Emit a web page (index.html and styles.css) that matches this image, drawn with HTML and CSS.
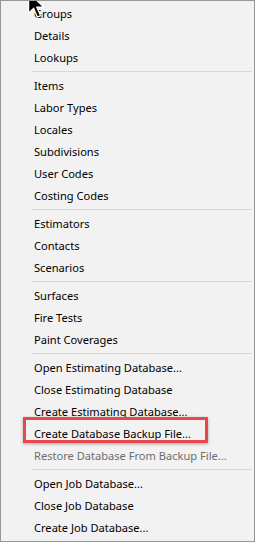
FILE: index.html
```html
<!DOCTYPE html>
<html>
<head>
<meta charset="utf-8">
<link rel="stylesheet" href="styles.css">
</head>
<body>
<div class="menu">
  <div class="item">Groups</div>
  <div class="item">Details</div>
  <div class="item">Lookups</div>
  <div class="sep"></div>
  <div class="item">Items</div>
  <div class="item">Labor Types</div>
  <div class="item">Locales</div>
  <div class="item">Subdivisions</div>
  <div class="item">User Codes</div>
  <div class="item">Costing Codes</div>
  <div class="sep"></div>
  <div class="item">Estimators</div>
  <div class="item">Contacts</div>
  <div class="item">Scenarios</div>
  <div class="sep"></div>
  <div class="item">Surfaces</div>
  <div class="item">Fire Tests</div>
  <div class="item">Paint Coverages</div>
  <div class="sep"></div>
  <div class="item">Open Estimating Database...</div>
  <div class="item">Close Estimating Database</div>
  <div class="item">Create Estimating Database...</div>
  <div class="item">Create Database Backup File...</div>
  <div class="item disabled">Restore Database From Backup File...</div>
  <div class="sep"></div>
  <div class="item">Open Job Database...</div>
  <div class="item">Close Job Database</div>
  <div class="item">Create Job Database...</div>
  <div class="highlight"></div>
  <svg class="cursor" width="20" height="30" viewBox="0 0 16 24">
    <polygon points="0.5,0.5 0.5,17 4.5,13 7.5,20 10,19 7,12 12.5,12" fill="#000" stroke="#fff" stroke-width="1"/>
  </svg>
</div>
</body>
</html>
```
FILE: styles.css
```css
html, body {
  margin: 0;
  padding: 0;
  background: #f0f0f0;
}
.menu {
  position: relative;
  box-sizing: border-box;
  width: 255px;
  height: 542px;
  border: 1px solid #979797;
  background: #f2f2f2;
  padding: 2px 0 2px 0;
  font-family: "Noto Sans", "Open Sans", sans-serif;
  font-size: 11.1px;
  color: #000;
  overflow: hidden;
}
.item {
  height: 22px;
  line-height: 22px;
  padding-left: 33px;
  white-space: nowrap;
}
.item.disabled {
  color: #6d6d6d;
}
.sep {
  height: 1px;
  margin: 2px 2px 3px 31px;
  background: #d7d7d7;
}
.highlight {
  position: absolute;
  left: 22px;
  top: 416px;
  width: 185px;
  height: 26px;
  box-sizing: border-box;
  border: 3px solid #e9474b;
  box-shadow: 0 1px 3px rgba(0,0,0,0.3);
}
.cursor {
  position: absolute;
  left: 27px;
  top: -9px;
}
```
